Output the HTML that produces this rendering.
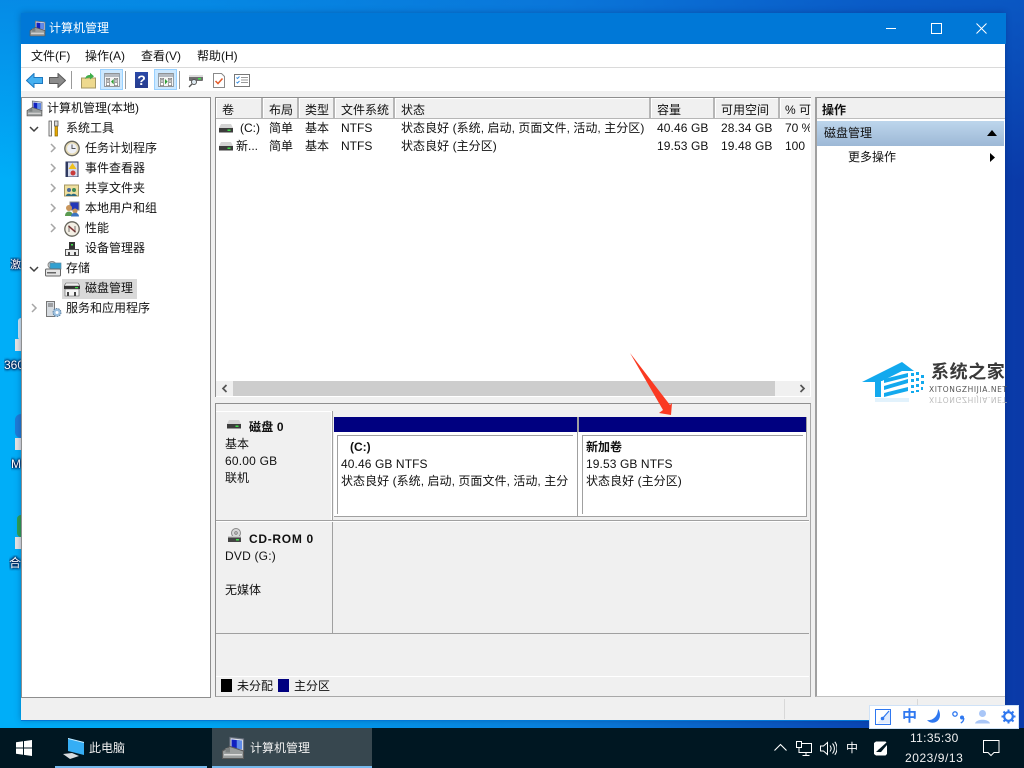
<!DOCTYPE html>
<html lang="zh"><head><meta charset="utf-8"><title>计算机管理</title>
<style>
html,body{margin:0;padding:0;width:1024px;height:768px;overflow:hidden}
body{position:relative;font:12px/16px "Liberation Sans","Noto Sans CJK SC",sans-serif;color:#111;background:linear-gradient(90deg,#00aef8 0,#00a6f2 20%,#0a7fdc 55%,#0a46b4 85%,#0a3aa8 100%)}
.a,.t,svg.i{position:absolute}
.t{white-space:nowrap;line-height:16px;letter-spacing:0}
.w{color:#fff}.b{font-weight:bold}
.hd{position:absolute;top:98px;height:20px;background:#f0f0f0;border-right:2px solid #b6b6b6;border-bottom:1px solid #b6b6b6;box-shadow:inset 1px 1px 0 #fff}
.d{position:absolute;color:#fff;text-shadow:0 0 3px #003,0 0 3px #003,0 0 2px #003;white-space:nowrap}
</style></head><body>
<svg width="0" height="0" style="position:absolute"><defs>
<symbol id="disk" viewBox="0 0 14 9"><path d="M2 0h10l2 4H0z" fill="#d4d4d4"/><rect y="4" width="14" height="4.500" fill="#3c3c3c"/><rect x="8.500" y="5.500" width="3" height="1.500" fill="#3fe04a"/></symbol>
<symbol id="pc" viewBox="0 0 16 16"><path d="M6 1l9 1v8l-9-1z" fill="#dfe3ea" stroke="#6b7380" stroke-width=".8"/><path d="M7 2.300l7 .8v5.700l-7-.8z" fill="#1020c0"/><path d="M10.500 2.700l3.500 .4v5.700l-3.500-.4z" fill="#5f8be8"/><path d="M1 10l5-3 9 3v5H1z" fill="#9a9e9e" stroke="#5a5a5a" stroke-width=".7"/><path d="M2 12h12v1H2z" fill="#dcdcdc"/><path d="M3 8h3v3H3z" fill="#7b8080"/></symbol>
<symbol id="chevR" viewBox="0 0 8 10"><path d="M2 1l4 4-4 4" fill="none" stroke="#a6a6a6" stroke-width="1.500"/></symbol>
<symbol id="chevD" viewBox="0 0 10 8"><path d="M1 2l4 4 4-4" fill="none" stroke="#404040" stroke-width="1.500"/></symbol>
<symbol id="win" viewBox="0 0 23 21"><rect x=".5" y=".5" width="22" height="20" fill="#f4f4f4" stroke="#666"/><rect x="1" y="1" width="21" height="5" fill="#b4bac2"/><rect x="3" y="8" width="5" height="11" fill="#fff" stroke="#777"/><rect x="15" y="8" width="5" height="11" fill="#fff" stroke="#777"/><path d="M4 10h3M4 12h3M4 14h3M16 10h3M16 12h3M16 14h3" stroke="#666"/></symbol>
</defs></svg>

<!-- top of desktop is darker, fading downward -->
<div class="a" style="left:0;top:0;width:1024px;height:180px;background:linear-gradient(rgba(10,110,215,.55),rgba(10,110,215,0))"></div>

<!-- desktop icons peeking from the left -->
<div class="d" style="left:10px;top:257px;font-size:11px;width:11px;overflow:hidden">激</div>
<div class="a" style="left:18px;top:318px;width:3px;height:22px;background:#cfe8f6;border-radius:3px 0 0 3px"></div>
<div class="a" style="left:15px;top:339px;width:6px;height:12px;background:#e4e4e4"></div>
<div class="d" style="left:4px;top:357px;width:17px;overflow:hidden;font-size:12px">360</div>
<div class="a" style="left:15px;top:414px;width:6px;height:24px;background:#1e7bd6;border-radius:6px 0 0 6px"></div>
<div class="a" style="left:15px;top:438px;width:6px;height:12px;background:#e4e4e4"></div>
<div class="d" style="left:11px;top:456px;width:10px;overflow:hidden;font-size:12px">M</div>
<div class="a" style="left:17px;top:515px;width:4px;height:22px;background:#2fa050;border-radius:4px 0 0 4px"></div>
<div class="a" style="left:15px;top:537px;width:6px;height:12px;background:#e4e4e4"></div>
<div class="d" style="left:9px;top:555px;width:12px;overflow:hidden;font-size:12px">合</div>

<!-- window -->
<div class="a" style="left:21px;top:13px;width:984px;height:707px;background:#f0f0f0;box-shadow:0 0 6px rgba(0,30,90,.35)"></div>
<div class="a" style="left:21px;top:13px;width:985px;height:31px;background:#0078d7"></div>
<div class="a" style="left:21px;top:720px;width:985px;height:1px;background:#0078d7"></div>
<svg class="i" style="left:29px;top:20px" width="17" height="17"><use href="#pc"/></svg>
<div class="t w" style="left:49px;top:20px">计算机管理</div>
<div class="a" style="left:886px;top:28px;width:10px;height:1px;background:#fff"></div>
<div class="a" style="left:931px;top:23px;width:9px;height:9px;border:1px solid #fff"></div>
<svg class="i" style="left:976px;top:23px" width="11" height="11"><path d="M.5.500l10 10M10.500.500l-10 10" stroke="#fff" stroke-width="1"/></svg>

<!-- menu -->
<div class="a" style="left:21px;top:44px;width:984px;height:23px;background:#fff"></div>
<div class="t" style="left:31px;top:48px">文件(F)</div>
<div class="t" style="left:85px;top:48px">操作(A)</div>
<div class="t" style="left:141px;top:48px">查看(V)</div>
<div class="t" style="left:197px;top:48px">帮助(H)</div>

<!-- toolbar -->
<div class="a" style="left:21px;top:67px;width:984px;height:23px;background:#fff;border-top:1px solid #dadada"></div>
<svg class="i" style="left:26px;top:73px" width="17" height="15"><path d="M8 .500L.5 7.500 8 14.500V10.500h8.500v-6H8z" fill="#46b0f0" stroke="#1d78c0"/></svg>
<svg class="i" style="left:49px;top:73px" width="17" height="15"><path d="M9 .500l7.500 7-7.500 7V10.500H.5v-6H9z" fill="#8b8b8b" stroke="#5a5a5a"/></svg>
<div class="a" style="left:71px;top:71px;width:1px;height:18px;background:#9a9a9a"></div>
<svg class="i" style="left:81px;top:72px" width="15" height="17"><path d="M.5 6h14v10H.5z" fill="#eed98e" stroke="#a59763"/><path d="M4 7c1-3 2-4 5-4V.8l4 3.400-4 3.300V5.500C7 5.500 6 6 4 7z" fill="#3fae4a"/></svg>
<div class="a" style="left:100px;top:69px;width:21px;height:19px;background:#cce8ff;border:1px solid #99d1ff"></div>
<svg class="i" style="left:104px;top:73px" width="16" height="14" viewBox="0 0 23 21"><use href="#win"/><path d="M14 9v8l-4-4z" fill="#2f9f35"/></svg>
<div class="a" style="left:125px;top:71px;width:1px;height:18px;background:#9a9a9a"></div>
<div class="a" style="left:135px;top:72px;width:13px;height:16px;background:linear-gradient(#2a49a8,#273c8e);color:#fff;font:bold 14px/16px 'Liberation Sans',sans-serif;text-align:center">?</div>
<div class="a" style="left:154px;top:69px;width:21px;height:19px;background:#cce8ff;border:1px solid #99d1ff"></div>
<svg class="i" style="left:158px;top:73px" width="16" height="14" viewBox="0 0 23 21"><use href="#win"/><path d="M10 9v8l4-4z" fill="#2f9f35"/></svg>
<div class="a" style="left:179px;top:71px;width:1px;height:18px;background:#9a9a9a"></div>
<svg class="i" style="left:188px;top:74px" width="16" height="14"><rect x="1" y="1" width="14" height="6" rx="1" fill="#6f6f6f"/><rect x="1" y="1" width="14" height="2" fill="#ddd"/><rect x="10" y="4" width="3" height="1.500" fill="#3fe04a"/><circle cx="6" cy="8" r="2.500" fill="#dfeaf2" stroke="#555"/><path d="M4 10l-3 3" stroke="#555" stroke-width="1.300"/></svg>
<svg class="i" style="left:213px;top:73px" width="12" height="15"><path d="M.5.500h8l3 3v11H.5z" fill="#fff" stroke="#8a8a8a"/><path d="M2.500 8l2.500 2.500L9.500 5.500" fill="none" stroke="#e35b2a" stroke-width="1.500"/></svg>
<svg class="i" style="left:234px;top:74px" width="16" height="13"><rect x=".5" y=".5" width="15" height="12" fill="#fff" stroke="#777"/><path d="M2.500 3.500l1 1 2-2M2.500 8l1 1 2-2" stroke="#3a8fe0" fill="none"/><path d="M7 3.500h7M7 6h7M7 8.500h7" stroke="#999"/></svg>

<!-- left tree pane -->
<div class="a" style="left:21px;top:97px;width:188px;height:599px;background:#fff;border:1px solid #8e8e8e"></div>
<svg class="i" style="left:26px;top:100px" width="17" height="17"><use href="#pc"/></svg>
<div class="t" style="left:47px;top:100px">计算机管理(本地)</div>

<svg class="i" style="left:29px;top:125px" width="10" height="8"><use href="#chevD"/></svg>
<svg class="i" style="left:47px;top:120px" width="12" height="17"><path d="M2 1v15h2.500V1z" fill="#eee" stroke="#555" stroke-width=".8"/><path d="M8 6h2.500v10H8z" fill="#e8a800" stroke="#8a6a00" stroke-width=".7"/><path d="M7.500 1h3.500v5H7.500z" fill="#d8d8d8" stroke="#555" stroke-width=".8"/></svg>
<div class="t" style="left:66px;top:120px">系统工具</div>

<svg class="i" style="left:49px;top:143px" width="8" height="10"><use href="#chevR"/></svg>
<svg class="i" style="left:64px;top:140px" width="16" height="17"><circle cx="8" cy="8.500" r="7.200" fill="#e6dab4" stroke="#66655c" stroke-width="1.300"/><circle cx="8" cy="8.500" r="5" fill="#eef0f6"/><path d="M8 4.500v4h3.500" fill="none" stroke="#555" stroke-width="1"/></svg>
<div class="t" style="left:85px;top:140px">任务计划程序</div>

<svg class="i" style="left:49px;top:163px" width="8" height="10"><use href="#chevR"/></svg>
<svg class="i" style="left:65px;top:161px" width="14" height="16"><rect x="1" y="1" width="12" height="15" fill="#d5daeb" stroke="#2f3a60"/><path d="M1 1h2v15H1z" fill="#2f3a60"/><path d="M7.500 2l4 6h-8z" fill="#eec01e"/><circle cx="8" cy="12" r="2.500" fill="#c83a3a"/></svg>
<div class="t" style="left:85px;top:160px">事件查看器</div>

<svg class="i" style="left:49px;top:183px" width="8" height="10"><use href="#chevR"/></svg>
<svg class="i" style="left:64px;top:182px" width="15" height="15"><path d="M.5 3h14v11H.5z" fill="#efdf9e" stroke="#a59763"/><circle cx="5" cy="8" r="2" fill="#4a6a9a"/><circle cx="10" cy="8" r="2" fill="#3e8a56"/><path d="M2 14c0-3 5-3 6 0zM7 14c0-3 5-3 6 0z" fill="#2c6a80"/></svg>
<div class="t" style="left:85px;top:180px">共享文件夹</div>

<svg class="i" style="left:49px;top:203px" width="8" height="10"><use href="#chevR"/></svg>
<svg class="i" style="left:64px;top:201px" width="16" height="16"><rect x="6" y="1" width="9" height="8" fill="#2438b8" stroke="#888"/><circle cx="5" cy="7" r="3" fill="#c9965c"/><path d="M1 15c0-6 8-6 8 0z" fill="#5a9a50"/><circle cx="11" cy="10" r="2.500" fill="#c9965c"/><path d="M7 15.500c0-5 8-5 8 0z" fill="#3b74c0"/></svg>
<div class="t" style="left:85px;top:200px">本地用户和组</div>

<svg class="i" style="left:49px;top:223px" width="8" height="10"><use href="#chevR"/></svg>
<svg class="i" style="left:64px;top:221px" width="16" height="16"><circle cx="8" cy="8" r="7.200" fill="#f3efe4" stroke="#66655c" stroke-width="1.300"/><path d="M4.500 5l7 6" stroke="#c83030" stroke-width="1.500"/><path d="M5 11V5l6 6V5" fill="none" stroke="#444" stroke-width=".7"/></svg>
<div class="t" style="left:85px;top:220px">性能</div>

<svg class="i" style="left:65px;top:241px" width="14" height="16"><rect x="4" y="1" width="6" height="8" fill="#333"/><rect x="6" y="3" width="2" height="1.500" fill="#3fe04a"/><path d="M0 8h14v7H0z" fill="#555"/><path d="M1 9h12v5H1z" fill="#eee"/><rect x="3" y="11" width="2" height="3" fill="#444"/><rect x="9" y="11" width="2" height="3" fill="#444"/></svg>
<div class="t" style="left:85px;top:240px">设备管理器</div>

<svg class="i" style="left:29px;top:265px" width="10" height="8"><use href="#chevD"/></svg>
<svg class="i" style="left:45px;top:261px" width="17" height="16"><ellipse cx="7" cy="4" rx="4" ry="3.500" fill="#d7d7d7" stroke="#888"/><rect x="5" y="2" width="11" height="6" fill="#32a0d0" stroke="#5c8ba0" stroke-width=".7"/><rect x=".5" y="8" width="15" height="7" rx="1" fill="#e4e4e4" stroke="#666"/><rect x="2" y="11" width="9" height="1.500" fill="#666"/></svg>
<div class="t" style="left:66px;top:260px">存储</div>

<div class="a" style="left:62px;top:279px;width:75px;height:20px;background:#d9d9d9"></div>
<svg class="i" style="left:64px;top:282px" width="16" height="15"><path d="M2 1h12l2 3H0z" fill="#eee" stroke="#555" stroke-width=".6"/><rect y="4" width="16" height="3" fill="#333"/><rect x="11" y="5" width="3" height="1.200" fill="#3fe04a"/><path d="M1 7h14v7H1z" fill="#f5f5f5" stroke="#555" stroke-width=".6"/><rect x="3" y="10" width="2" height="4" fill="#444"/><rect x="10" y="10" width="2" height="4" fill="#444"/></svg>
<div class="t" style="left:85px;top:280px">磁盘管理</div>

<svg class="i" style="left:30px;top:303px" width="8" height="10"><use href="#chevR"/></svg>
<svg class="i" style="left:46px;top:301px" width="16" height="17"><rect x=".5" y=".5" width="8" height="15" fill="#d6dbe0" stroke="#777"/><path d="M2 3h5M2 5h5" stroke="#666"/><circle cx="11" cy="11.500" r="4" fill="#9cc0e0" stroke="#5a7f9f" stroke-dasharray="1.500 1"/><circle cx="11" cy="11.500" r="1.500" fill="#fff"/></svg>
<div class="t" style="left:66px;top:300px">服务和应用程序</div>

<!-- list pane -->
<div class="a" style="left:215px;top:97px;width:595px;height:299px;background:#fff;border-left:1px solid #8e8e8e;border-top:1px solid #8e8e8e"></div>
<div class="hd" style="left:216px;width:45px"></div>
<div class="hd" style="left:263px;width:34px"></div>
<div class="hd" style="left:299px;width:34px"></div>
<div class="hd" style="left:335px;width:58px"></div>
<div class="hd" style="left:395px;width:254px"></div>
<div class="hd" style="left:651px;width:62px"></div>
<div class="hd" style="left:715px;width:63px"></div>
<div class="hd" style="left:780px;width:30px;border-right:0"></div>
<div class="t" style="left:222px;top:102px">卷</div>
<div class="t" style="left:269px;top:102px">布局</div>
<div class="t" style="left:305px;top:102px">类型</div>
<div class="t" style="left:341px;top:102px">文件系统</div>
<div class="t" style="left:401px;top:102px">状态</div>
<div class="t" style="left:657px;top:102px">容量</div>
<div class="t" style="left:721px;top:102px">可用空间</div>
<div class="t" style="left:785px;top:102px">% 可</div>

<svg class="i" style="left:219px;top:124px" width="14" height="9"><use href="#disk"/></svg>
<div class="t" style="left:240px;top:120px">(C:)</div>
<div class="t" style="left:269px;top:120px">简单</div>
<div class="t" style="left:305px;top:120px">基本</div>
<div class="t" style="left:341px;top:120px">NTFS</div>
<div class="t" style="left:401px;top:120px;letter-spacing:.05px">状态良好 (系统, 启动, 页面文件, 活动, 主分区)</div>
<div class="t" style="left:657px;top:120px;letter-spacing:.1px">40.46 GB</div>
<div class="t" style="left:721px;top:120px;letter-spacing:.1px">28.34 GB</div>
<div class="t" style="left:785px;top:120px;width:25px;overflow:hidden">70 %</div>
<svg class="i" style="left:219px;top:142px" width="14" height="9"><use href="#disk"/></svg>
<div class="t" style="left:236px;top:138px">新...</div>
<div class="t" style="left:269px;top:138px">简单</div>
<div class="t" style="left:305px;top:138px">基本</div>
<div class="t" style="left:341px;top:138px">NTFS</div>
<div class="t" style="left:401px;top:138px;letter-spacing:.05px">状态良好 (主分区)</div>
<div class="t" style="left:657px;top:138px;letter-spacing:.1px">19.53 GB</div>
<div class="t" style="left:721px;top:138px;letter-spacing:.1px">19.48 GB</div>
<div class="t" style="left:785px;top:138px">100</div>

<!-- hscroll -->
<div class="a" style="left:216px;top:381px;width:594px;height:15px;background:#f0f0f0"></div>
<div class="a" style="left:233px;top:381px;width:542px;height:15px;background:#cdcdcd"></div>
<svg class="i" style="left:221px;top:384px" width="7" height="9"><path d="M5.500 1L2 4.500 5.500 8" fill="none" stroke="#555" stroke-width="1.700"/></svg>
<svg class="i" style="left:799px;top:384px" width="7" height="9"><path d="M1.500 1L5 4.500 1.500 8" fill="none" stroke="#555" stroke-width="1.700"/></svg>

<!-- graphical disk area -->
<div class="a" style="left:215px;top:403px;width:594px;height:292px;background:#f0f0f0;border-left:1px solid #8e8e8e;border-right:1px solid #a8a8a8;border-top:1px solid #8e8e8e;border-bottom:1px solid #a8a8a8"></div>
<div class="a" style="left:216px;top:411px;width:116px;height:1px;background:#fff"></div>
<div class="a" style="left:331px;top:412px;width:1px;height:108px;background:#fff"></div>
<div class="a" style="left:332px;top:411px;width:1px;height:222px;background:#a0a0a0"></div>
<div class="a" style="left:216px;top:520px;width:593px;height:1px;background:#a0a0a0"></div>
<div class="a" style="left:216px;top:521px;width:593px;height:1px;background:#fff"></div>
<div class="a" style="left:216px;top:633px;width:593px;height:1px;background:#a0a0a0"></div>
<div class="a" style="left:216px;top:676px;width:593px;height:1px;background:#fff"></div>

<svg class="i" style="left:227px;top:420px" width="14" height="9"><use href="#disk"/></svg>
<div class="t b" style="left:249px;top:419px;letter-spacing:.2px">磁盘 0</div>
<div class="t" style="left:225px;top:436px">基本</div>
<div class="t" style="left:225px;top:453px;letter-spacing:.2px">60.00 GB</div>
<div class="t" style="left:225px;top:470px">联机</div>

<svg class="i" style="left:227px;top:528px" width="15" height="15"><circle cx="9" cy="5" r="4.500" fill="#d8d8d8" stroke="#888"/><circle cx="9" cy="5" r="1.200" fill="#fff" stroke="#777"/><rect x="1" y="9" width="13" height="5" fill="#444"/><rect x="1" y="8" width="13" height="1.500" fill="#ccc"/><rect x="9" y="11" width="3" height="1.500" fill="#3fe04a"/></svg>
<div class="t b" style="left:249px;top:531px;letter-spacing:.7px">CD-ROM 0</div>
<div class="t" style="left:225px;top:548px;letter-spacing:.2px">DVD (G:)</div>
<div class="t" style="left:225px;top:582px">无媒体</div>

<div class="a" style="left:334px;top:417px;width:243px;height:15px;background:#000080"></div>
<div class="a" style="left:577px;top:417px;width:2px;height:15px;background:#a0a0a0"></div>
<div class="a" style="left:579px;top:417px;width:227px;height:15px;background:#000080"></div>
<div class="a" style="left:806px;top:417px;width:1px;height:100px;background:#a0a0a0"></div>
<div class="a" style="left:334px;top:432px;width:243px;height:84px;background:#fff"></div>
<div class="a" style="left:578px;top:432px;width:228px;height:84px;background:#fff"></div>
<div class="a" style="left:577px;top:432px;width:1px;height:85px;background:#a0a0a0"></div>
<div class="a" style="left:337px;top:435px;width:236px;height:79px;border-top:1px solid #a0a0a0;border-left:1px solid #a0a0a0;box-sizing:border-box"></div>
<div class="a" style="left:582px;top:435px;width:221px;height:79px;border-top:1px solid #a0a0a0;border-left:1px solid #a0a0a0;box-sizing:border-box"></div>
<div class="a" style="left:334px;top:516px;width:473px;height:1px;background:#a0a0a0"></div>

<div class="t b" style="left:350px;top:439px">(C:)</div>
<div class="t" style="left:341px;top:456px;letter-spacing:.1px">40.46 GB NTFS</div>
<div class="t" style="left:341px;top:473px;letter-spacing:.05px;width:228px;overflow:hidden">状态良好 (系统, 启动, 页面文件, 活动, 主分区)</div>
<div class="t b" style="left:586px;top:439px">新加卷</div>
<div class="t" style="left:586px;top:456px;letter-spacing:.1px">19.53 GB NTFS</div>
<div class="t" style="left:586px;top:473px;letter-spacing:.05px">状态良好 (主分区)</div>

<div class="a" style="left:221px;top:679px;width:11px;height:13px;background:#000"></div>
<div class="t" style="left:237px;top:678px">未分配</div>
<div class="a" style="left:278px;top:679px;width:11px;height:13px;background:#000080"></div>
<div class="t" style="left:294px;top:678px">主分区</div>

<!-- red arrow -->
<svg class="i" style="left:625px;top:350px" width="55" height="70"><path d="M5 3L45 55l2-2-1 12-12-2 4-3z" fill="#fa3a22"/></svg>

<!-- action pane -->
<div class="a" style="left:815px;top:97px;width:190px;height:600px;background:#fff;box-sizing:border-box;border-left:2px solid #a0a0a0;border-top:1px solid #8e8e8e;border-bottom:1px solid #c0c0c0"></div>
<div class="a" style="left:817px;top:98px;width:188px;height:21px;background:#f0f0f0;border-bottom:1px solid #bdbdbd;box-sizing:border-box"></div>
<div class="t b" style="left:822px;top:102px">操作</div>
<div class="a" style="left:817px;top:121px;width:187px;height:25px;background:linear-gradient(#bdd6ec,#9db8d6)"></div>
<div class="t" style="left:824px;top:125px">磁盘管理</div>
<svg class="i" style="left:987px;top:130px" width="10" height="6"><path d="M5 0l5 6H0z" fill="#000"/></svg>
<div class="t" style="left:848px;top:149px">更多操作</div>
<svg class="i" style="left:990px;top:153px" width="6" height="9"><path d="M0 0l5 4.500L0 9z" fill="#000"/></svg>

<!-- watermark -->
<svg class="i" style="left:862px;top:361px" width="64" height="46"><path d="M0 21L40 1l12 9H40L20 20H14v1z" fill="#12a9ee"/><path d="M13 20h6v16h-6zM22 18L46 12v4L22 22zM22 25L46 18v4L22 29zM22 32L46 26v4L22 36z" fill="#12a9ee"/><path d="M49 12h3v3h-3zM54 11h3v3h-3zM59 14h3v3h-3zM49 18h3v3h-3zM54 17h3v3h-3zM59 20h3v3h-3zM49 24h3v3h-3zM54 23h3v3h-3zM59 26h2v3h-2zM49 30h3v2h-3zM54 29h3v2h-3z" fill="#12a9ee"/><path d="M13 37h34v4H13z" fill="#cfeafa" opacity=".6"/></svg>
<div class="t b" style="left:931px;top:362px;font-size:18px;line-height:20px;letter-spacing:.6px;color:#3a3a3a;width:76px;overflow:hidden">系统之家</div>
<div class="t" style="left:929px;top:385px;font-size:7.500px;line-height:10px;letter-spacing:.6px;color:#555;font-family:'DejaVu Sans',sans-serif">XITONGZHIJIA.NET</div>
<div class="t" style="left:929px;top:394px;font-size:7.500px;line-height:10px;letter-spacing:.6px;color:#bbb;transform:scaleY(-1);font-family:'DejaVu Sans',sans-serif">XITONGZHIJIA.NET</div>

<!-- status bar separators -->
<div class="a" style="left:784px;top:699px;width:1px;height:20px;background:#d8d8d8"></div>
<div class="a" style="left:917px;top:699px;width:1px;height:20px;background:#d8d8d8"></div>

<!-- taskbar -->
<div class="a" style="left:0;top:728px;width:1024px;height:40px;background:#001722"></div>
<svg class="i" style="left:16px;top:740px" width="16" height="16"><path d="M0 2.300L7 1.300V7.500H0zM8 1.100L16 0V7.500H8zM0 8.500H7V14.700L0 13.700zM8 8.500H16V16L8 14.900z" fill="#fff"/></svg>
<div class="a" style="left:55px;top:766px;width:152px;height:2px;background:#76b9ed"></div>
<svg class="i" style="left:62px;top:737px" width="23" height="22"><path d="M6 1l16 4v13L6 14z" fill="#35aef5"/><path d="M6 1l16 4v1L6 2z" fill="#c9ecff"/><path d="M1 17l9-1 7 3-9 3z" fill="#d8dde0"/></svg>
<div class="t" style="left:89px;top:740px;color:#f2f2f2">此电脑</div>
<div class="a" style="left:212px;top:728px;width:160px;height:40px;background:#37474f"></div>
<div class="a" style="left:212px;top:766px;width:160px;height:2px;background:#76b9ed"></div>
<svg class="i" style="left:221px;top:736px" width="24" height="24"><use href="#pc"/></svg>
<div class="t" style="left:250px;top:740px;color:#f2f2f2">计算机管理</div>

<svg class="i" style="left:774px;top:743px" width="13" height="9"><path d="M.5 7.500l6-6 6 6" fill="none" stroke="#fff" stroke-width="1.100"/></svg>
<svg class="i" style="left:796px;top:741px" width="16" height="15"><path d="M4.500 2.500h11v9h-11M10 11.500v3M6.500 14.500h7" fill="none" stroke="#fff"/><rect x=".5" y=".5" width="5" height="6" fill="#001722" stroke="#fff"/><path d="M3 6.500v5h3" fill="none" stroke="#fff"/></svg>
<svg class="i" style="left:820px;top:741px" width="17" height="15"><path d="M.5 5v5h3l4 3.500V1.500l-4 3.500z" fill="none" stroke="#fff"/><path d="M10 4.500c1.500 2 1.500 4 0 6M12.500 2.500c2.500 3 2.500 7 0 10M14.800.800c3 4 3 9 0 13" fill="none" stroke="#fff"/></svg>
<div class="t" style="left:846px;top:740px;color:#fff">中</div>
<svg class="i" style="left:873px;top:741px" width="15" height="15"><path d="M1 2l2-1.500h9.500L14 2v11l-1.500 1.500H3L1 13z" fill="#fff"/><path d="M3 11L14 1v3L8 11z" fill="#001722"/><circle cx="7" cy="9.500" r="1.600" fill="#001722"/></svg>
<div class="t" style="left:910px;top:730px;color:#f2f2f2;letter-spacing:.35px">11:35:30</div>
<div class="t" style="left:905px;top:750px;color:#f2f2f2;letter-spacing:.55px">2023/9/13</div>
<svg class="i" style="left:983px;top:740px" width="17" height="17"><path d="M.5.500h15.500v12h-5l-3 3-3-3H.5z" fill="none" stroke="#fff"/></svg>

<!-- IME bar -->
<div class="a" style="left:869px;top:705px;width:150px;height:24px;background:#fff;border:1px solid #cfe2f7;box-sizing:border-box"></div>
<svg class="i" style="left:875px;top:709px" width="16" height="16"><rect x=".5" y=".5" width="15" height="15" fill="#fff" stroke="#2f78f0"/><path d="M2 14.500h13V1z" fill="#2f78f0" opacity=".15"/><path d="M7 10L14 2" stroke="#2f78f0" stroke-width="1.200"/><circle cx="7.500" cy="9.500" r="1.800" fill="#2f78f0"/></svg>
<div class="t b" style="left:902px;top:709px;color:#2f78f0;font-size:15px">中</div>
<svg class="i" style="left:927px;top:709px" width="16" height="15"><path d="M11 0c3.500 4.500 2.500 12-3.500 13.500C4 14.300 2 13 0 11c5.500 1 11-3.500 11-11z" fill="#2f78f0"/></svg>
<svg class="i" style="left:952px;top:710px" width="14" height="14"><circle cx="3" cy="4" r="2.200" fill="none" stroke="#2f78f0" stroke-width="1.300"/><circle cx="10" cy="7.500" r="2" fill="#2f78f0"/><path d="M11.800 8c0 2.500-1 4-3 5" fill="none" stroke="#2f78f0" stroke-width="1.300"/></svg>
<svg class="i" style="left:975px;top:709px" width="15" height="15"><circle cx="7.500" cy="4.500" r="3.500" fill="#a9c6f7"/><path d="M0 14.500c1-5 14-5 15 0z" fill="#a9c6f7"/></svg>
<svg class="i" style="left:1001px;top:709px" width="15" height="15"><circle cx="7.500" cy="7.500" r="4.300" fill="none" stroke="#2f78f0" stroke-width="2.200"/><path d="M7.500.500v3M7.500 11.500v3M.5 7.500h3M11.500 7.500h3M2.500 2.500l2 2M10.500 10.500l2 2M12.500 2.500l-2 2M4.500 10.500l-2 2" stroke="#2f78f0" stroke-width="2"/></svg>
</body></html>
